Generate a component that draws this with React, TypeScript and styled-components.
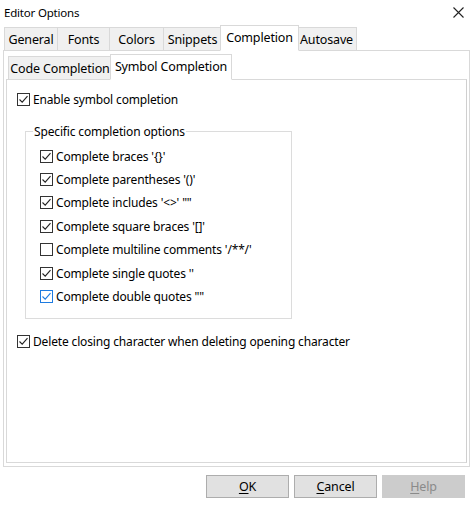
import React from 'react';
import styled, { createGlobalStyle } from 'styled-components';

const GlobalStyle = createGlobalStyle`
  html, body {
    margin: 0;
    padding: 0;
    background: #fff;
  }
  body {
    font-family: 'Noto Sans', 'Open Sans', sans-serif;
    font-size: 12px;
    letter-spacing: -0.15px;
    color: #000;
  }
`;

const Window = styled.div`
  width: 474px;
  height: 506px;
  display: flex;
  flex-direction: column;
  background: #fff;
  box-sizing: border-box;
  overflow: hidden;
`;

const TitleBar = styled.div`
  height: 25px;
  display: flex;
  align-items: center;
  justify-content: space-between;
  padding: 0 10px 0 4px;
  font-size: 11.5px;
  letter-spacing: -0.2px;
`;

const CloseIcon = () => (
  <svg width='11' height='11' viewBox='0 0 11 11'>
    <path d='M0.5 0.5 L10.5 10.5 M10.5 0.5 L0.5 10.5' stroke='#222' strokeWidth='1.1' />
  </svg>
);

const TabStrip = styled.div<{ $inset: number }>`
  display: flex;
  align-items: flex-end;
  padding-left: ${({ $inset }) => $inset}px;
  height: 25px;
  position: relative;
  z-index: 1;
`;

const Tab = styled.div<{ $active?: boolean; $width: number }>`
  box-sizing: border-box;
  width: ${({ $width }) => $width}px;
  height: ${({ $active }) => ($active ? 26 : 23)}px;
  margin: ${({ $active }) => ($active ? '0 -2px -1px -2px' : '0')};
  padding-top: 3px;
  border: 1px solid #d9d9d9;
  border-bottom: ${({ $active }) => ($active ? '1px solid #fff' : '0')};
  margin-left: ${({ $active }) => ($active ? -2 : -1)}px;
  background: ${({ $active }) => ($active ? '#fff' : '#f0f0f0')};
  text-align: center;
  font-size: 12.5px;
  white-space: nowrap;
  position: relative;
  z-index: ${({ $active }) => ($active ? 2 : 1)};
  &:first-child {
    margin-left: 0;
  }
`;

const OuterPage = styled.div`
  margin: 0 4px 0 3px;
  height: 417px;
  box-sizing: border-box;
  border: 1px solid #d9d9d9;
  padding: 3px 2px 3px 2px;
  display: flex;
  flex-direction: column;
`;

const InnerPage = styled.div`
  flex: 1;
  border: 1px solid #d9d9d9;
  border-right-color: #cfcfcf;
  padding: 8px 0 0 10px;
  display: flex;
  flex-direction: column;
`;

const Row = styled.label`
  display: flex;
  align-items: center;
  height: 23.4px;
  font-size: 12px;
  white-space: nowrap;
  flex-shrink: 0;
`;

const Box = styled.span<{ $focused?: boolean }>`
  width: 13px;
  height: 13px;
  box-sizing: border-box;
  border: 1px solid ${({ $focused }) => ($focused ? '#1e7be0' : '#333')};
  background: #fff;
  margin-right: 3px;
  display: flex;
  align-items: center;
  justify-content: center;
  flex-shrink: 0;
`;

const Check = ({ checked = true, focused = false }: { checked?: boolean; focused?: boolean }) => (
  <Box $focused={focused}>
    {checked && (
      <svg width='11' height='11' viewBox='0 0 11 11'>
        <path d='M1.5 5.5 L4.2 8.2 L9.5 2.2' fill='none' stroke={focused ? '#1e7be0' : '#222'} strokeWidth='1.1' />
      </svg>
    )}
  </Box>
);

const GroupBox = styled.fieldset`
  margin: 12px 0 0 8px;
  width: 267px;
  height: 196px;
  box-sizing: border-box;
  border: 1px solid #dcdcdc;
  padding: 4px 0 0 14px;
  display: flex;
  flex-direction: column;
  flex-shrink: 0;
`;

const Legend = styled.legend`
  font-size: 12px;
  padding: 0 1px;
  margin-left: -7px;
`;

const Spacer = styled.div<{ $h: number }>`
  height: ${({ $h }) => $h}px;
  flex-shrink: 0;
`;

const Footer = styled.div`
  flex: 1;
  display: flex;
  justify-content: flex-end;
  align-items: flex-start;
  gap: 5px;
  padding: 8px 9px 0 0;
`;

const Button = styled.button<{ $disabled?: boolean }>`
  width: 83px;
  height: 23px;
  box-sizing: border-box;
  border: 1px solid ${({ $disabled }) => ($disabled ? '#cccccc' : '#adadad')};
  background: ${({ $disabled }) => ($disabled ? '#cccccc' : '#e1e1e1')};
  color: ${({ $disabled }) => ($disabled ? '#8a8a8a' : '#000')};
  font-family: 'Noto Sans', 'Open Sans', sans-serif;
  font-size: 12.5px;
  letter-spacing: -0.15px;
  padding: 0;
  u {
    text-decoration-thickness: 1px;
    text-underline-offset: 2px;
  }
`;

const options: { text: string; checked: boolean; focused?: boolean }[] = [
  { text: "Complete braces '{}'", checked: true },
  { text: "Complete parentheses '()'", checked: true },
  { text: "Complete includes '<>' \"\"", checked: true },
  { text: "Complete square braces '[]'", checked: true },
  { text: "Complete multiline comments '/**/'", checked: false },
  { text: "Complete single quotes ''", checked: true },
  { text: 'Complete double quotes ""', checked: true, focused: true },
];

export default function App() {
  return (
    <Window>
      <GlobalStyle />
      <TitleBar>
        <span>Editor Options</span>
        <CloseIcon />
      </TitleBar>
      <TabStrip $inset={4}>
        <Tab $width={54}>General</Tab>
        <Tab $width={53}>Fonts</Tab>
        <Tab $width={55}>Colors</Tab>
        <Tab $width={59}>Snippets</Tab>
        <Tab $width={79} $active>Completion</Tab>
        <Tab $width={61}>Autosave</Tab>
      </TabStrip>
      <OuterPage>
        <TabStrip $inset={2}>
          <Tab $width={104}>Code Completion</Tab>
          <Tab $width={122} $active>Symbol Completion</Tab>
        </TabStrip>
        <InnerPage>
          <Row>
            <Check />
            Enable symbol completion
          </Row>
          <GroupBox>
            <Legend>Specific completion options</Legend>
            {options.map((o) => (
              <Row key={o.text}>
                <Check checked={o.checked} focused={o.focused} />
                {o.text}
              </Row>
            ))}
          </GroupBox>
          <Spacer $h={10} />
          <Row>
            <Check />
            Delete closing character when deleting opening character
          </Row>
        </InnerPage>
      </OuterPage>
      <Footer>
        <Button>
          <u>O</u>K
        </Button>
        <Button>
          <u>C</u>ancel
        </Button>
        <Button $disabled>
          <u>H</u>elp
        </Button>
      </Footer>
    </Window>
  );
}
